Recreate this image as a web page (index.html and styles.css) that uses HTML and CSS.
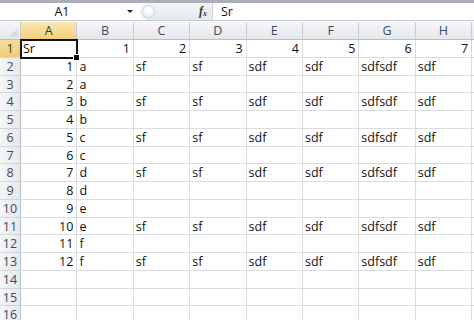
FILE: index.html
```html
<!DOCTYPE html>
<html>
<head>
<meta charset="utf-8">
<link rel="stylesheet" href="styles.css">
</head>
<body>
<div class="app">
  <div class="topstrip"></div>
  <div class="fbar">
    <div class="namebox"><span class="nb-text">A1</span><span class="nb-arrow"></span></div>
    <div class="fmid"><span class="knob"></span><span class="fx">f<sub>x</sub></span></div>
    <div class="finput">Sr</div>
  </div>
  <div class="gap"></div>
  <div class="sheet" id="sheet">
    <div class="corner"><span class="tri"></span></div>
    <div class="ch sel">A</div><div class="ch">B</div><div class="ch">C</div><div class="ch">D</div><div class="ch">E</div><div class="ch">F</div><div class="ch">G</div><div class="ch">H</div><div class="ch"></div>

    <div class="rh sel">1</div><div class="c active">Sr</div><div class="c n">1</div><div class="c n">2</div><div class="c n">3</div><div class="c n">4</div><div class="c n">5</div><div class="c n">6</div><div class="c n">7</div><div class="c"></div>
    <div class="rh">2</div><div class="c n">1</div><div class="c">a</div><div class="c">sf</div><div class="c">sf</div><div class="c">sdf</div><div class="c">sdf</div><div class="c">sdfsdf</div><div class="c">sdf</div><div class="c"></div>
    <div class="rh">3</div><div class="c n">2</div><div class="c">a</div><div class="c"></div><div class="c"></div><div class="c"></div><div class="c"></div><div class="c"></div><div class="c"></div><div class="c"></div>
    <div class="rh">4</div><div class="c n">3</div><div class="c">b</div><div class="c">sf</div><div class="c">sf</div><div class="c">sdf</div><div class="c">sdf</div><div class="c">sdfsdf</div><div class="c">sdf</div><div class="c"></div>
    <div class="rh">5</div><div class="c n">4</div><div class="c">b</div><div class="c"></div><div class="c"></div><div class="c"></div><div class="c"></div><div class="c"></div><div class="c"></div><div class="c"></div>
    <div class="rh">6</div><div class="c n">5</div><div class="c">c</div><div class="c">sf</div><div class="c">sf</div><div class="c">sdf</div><div class="c">sdf</div><div class="c">sdfsdf</div><div class="c">sdf</div><div class="c"></div>
    <div class="rh">7</div><div class="c n">6</div><div class="c">c</div><div class="c"></div><div class="c"></div><div class="c"></div><div class="c"></div><div class="c"></div><div class="c"></div><div class="c"></div>
    <div class="rh">8</div><div class="c n">7</div><div class="c">d</div><div class="c">sf</div><div class="c">sf</div><div class="c">sdf</div><div class="c">sdf</div><div class="c">sdfsdf</div><div class="c">sdf</div><div class="c"></div>
    <div class="rh">9</div><div class="c n">8</div><div class="c">d</div><div class="c"></div><div class="c"></div><div class="c"></div><div class="c"></div><div class="c"></div><div class="c"></div><div class="c"></div>
    <div class="rh">10</div><div class="c n">9</div><div class="c">e</div><div class="c"></div><div class="c"></div><div class="c"></div><div class="c"></div><div class="c"></div><div class="c"></div><div class="c"></div>
    <div class="rh">11</div><div class="c n">10</div><div class="c">e</div><div class="c">sf</div><div class="c">sf</div><div class="c">sdf</div><div class="c">sdf</div><div class="c">sdfsdf</div><div class="c">sdf</div><div class="c"></div>
    <div class="rh">12</div><div class="c n">11</div><div class="c">f</div><div class="c"></div><div class="c"></div><div class="c"></div><div class="c"></div><div class="c"></div><div class="c"></div><div class="c"></div>
    <div class="rh">13</div><div class="c n">12</div><div class="c">f</div><div class="c">sf</div><div class="c">sf</div><div class="c">sdf</div><div class="c">sdf</div><div class="c">sdfsdf</div><div class="c">sdf</div><div class="c"></div>
    <div class="rh">14</div><div class="c"></div><div class="c"></div><div class="c"></div><div class="c"></div><div class="c"></div><div class="c"></div><div class="c"></div><div class="c"></div><div class="c"></div>
    <div class="rh">15</div><div class="c"></div><div class="c"></div><div class="c"></div><div class="c"></div><div class="c"></div><div class="c"></div><div class="c"></div><div class="c"></div><div class="c"></div>
    <div class="rh">16</div><div class="c"></div><div class="c"></div><div class="c"></div><div class="c"></div><div class="c"></div><div class="c"></div><div class="c"></div><div class="c"></div><div class="c"></div>
  </div>
</div>
</body>
</html>
```

FILE: styles.css
```css
html, body {
  margin: 0;
  padding: 0;
  background: #ffffff;
  overflow: hidden;
}
.app {
  width: 474px;
  height: 320px;
  overflow: hidden;
  font-family: "Open Sans", "Noto Sans", sans-serif;
  color: #111;
}
.topstrip {
  height: 3px;
  background: #a9afb8;
}
.fbar {
  display: flex;
  height: 17px;
  border-bottom: 1px solid #c6cbd2;
  background: #fff;
}
.namebox {
  width: 140px;
  display: flex;
  align-items: center;
  position: relative;
}
.nb-text {
  width: 124px;
  text-align: center;
  font-size: 12.5px;
  color: #111;
}
.nb-arrow {
  width: 0;
  height: 0;
  border-left: 3px solid transparent;
  border-right: 3px solid transparent;
  border-top: 3px solid #222;
  margin-left: 3px;
}
.fmid {
  width: 73px;
  background: linear-gradient(#f3f4f6, #e6e9ed);
  border-radius: 9px 0 0 9px;
  display: flex;
  align-items: center;
  justify-content: space-between;
  border-right: 1px solid #d0d4da;
  box-sizing: border-box;
}
.knob {
  width: 13px;
  height: 13px;
  border-radius: 50%;
  border: 1px solid #cfd3d9;
  background: radial-gradient(circle at 50% 35%, #ffffff, #e9ecf0);
  margin-left: 2px;
  box-sizing: border-box;
}
.fx {
  font-family: "Liberation Serif", serif;
  font-style: italic;
  font-weight: bold;
  font-size: 12px;
  color: #333;
  margin-right: 5px;
}
.fx sub {
  font-size: 8px;
  vertical-align: -1px;
}
.finput {
  flex: 1;
  padding-left: 8px;
  font-size: 12.5px;
  line-height: 17px;
  color: #111;
}
.gap {
  height: 1px;
  background: #fff;
}
.sheet {
  display: grid;
  grid-template-columns: 21px repeat(8, 56.4px) 1fr;
  grid-template-rows: 18px repeat(16, 17.75px);
  font-size: 12.5px;
}
.corner {
  background: linear-gradient(#f4f5f7, #e5e8ec);
  border-right: 1px solid #c4c9d0;
  border-bottom: 1px solid #b9bfc7;
  box-sizing: border-box;
  position: relative;
}
.tri {
  position: absolute;
  right: 2px;
  bottom: 2px;
  width: 0;
  height: 0;
  border-left: 9px solid transparent;
  border-bottom: 9px solid #d9dce1;
}
.ch {
  background: linear-gradient(#f6f7f9, #e3e6eb);
  border-right: 1px solid #c8cdd4;
  border-bottom: 1px solid #b9bfc7;
  box-sizing: border-box;
  text-align: center;
  color: #3d4a5c;
  line-height: 17px;
  font-size: 12.5px;
}
.ch.sel {
  background: linear-gradient(#fbe7b3, #f4cf79);
  border-bottom: 1px solid #e3ab46;
  color: #2e3a4a;
}
.rh {
  background: linear-gradient(90deg, #f5f6f8, #e6e9ed);
  border-right: 1px solid #b9bfc7;
  border-bottom: 1px solid #d3d7dd;
  box-sizing: border-box;
  text-align: center;
  color: #3d4a5c;
  line-height: 17px;
  font-size: 12.5px;
}
.rh.sel {
  background: linear-gradient(#f9dc96, #f3cc73);
  border-right: 1px solid #e3ab46;
  color: #2e3a4a;
}
.c {
  border-right: 1px solid #dadcdf;
  border-bottom: 1px solid #dadcdf;
  box-sizing: border-box;
  padding: 0 2px;
  line-height: 17px;
  white-space: nowrap;
  overflow: hidden;
  color: #111;
}
.c.n {
  text-align: right;
  padding-right: 3px;
}
.c.active {
  position: relative;
  outline: 2px solid #111;
  outline-offset: -1px;
  z-index: 2;
  overflow: visible;
}
.c.active::after {
  content: "";
  position: absolute;
  right: -4px;
  bottom: -4px;
  width: 5px;
  height: 5px;
  background: #111;
  border: 1px solid #fff;
}
```
